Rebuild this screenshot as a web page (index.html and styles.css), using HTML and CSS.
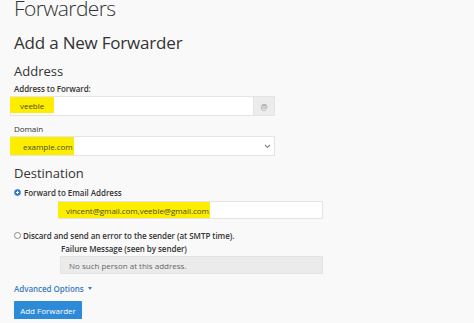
FILE: index.html
```html
<!DOCTYPE html>
<html>
<head>
<meta charset="utf-8">
<link rel="stylesheet" href="styles.css">
</head>
<body>
<div class="page">
  <h1 class="title">Forwarders</h1>
  <h2 class="subtitle">Add a New Forwarder</h2>
  <h3 class="section">Address</h3>
  <div class="label">Address to Forward:</div>
  <div class="input-group">
    <div class="field"><span class="hl hl-veeble">veeble</span></div>
    <div class="addon">@</div>
  </div>
  <div class="label label-plain">Domain</div>
  <div class="select">
    <span class="hl hl-domain">example.com</span>
    <svg class="caret" width="7" height="5" viewBox="0 0 7 5"><path d="M1 1 L3.5 3.5 L6 1" fill="none" stroke="#888" stroke-width="1.1"/></svg>
  </div>
  <h3 class="section dest">Destination</h3>
  <div class="radio-row">
    <span class="radio on"></span><span class="radio-label">Forward to Email Address</span>
  </div>
  <div class="indent">
    <div class="field wide"><span class="hl hl-email">vincent@gmail.com,veeble@gmail.com</span></div>
  </div>
  <div class="radio-row r2">
    <span class="radio"></span><span class="radio-label">Discard and send an error to the sender (at SMTP time).</span>
  </div>
  <div class="indent">
    <div class="sublabel">Failure Message (seen by sender)</div>
    <div class="field wide disabled">No such person at this address.</div>
  </div>
  <div class="adv">Advanced Options <span class="tri"></span></div>
  <div class="btn">Add Forwarder</div>
</div>
</body>
</html>
```

FILE: styles.css
```css
html, body {
  margin: 0;
  padding: 0;
  background: #f9f9f9;
  font-family: "Open Sans", "Noto Sans", sans-serif;
  color: #333;
  overflow: hidden;
}
.page {
  padding-left: 14px;
  width: 460px;
}
.title {
  font-size: 21px;
  font-weight: 300;
  line-height: 24px;
  margin: -4px 0 0 0;
  letter-spacing: -0.6px;
}
.subtitle {
  font-size: 17px;
  font-weight: 400;
  line-height: 22px;
  margin: 12px 0 0 0;
  letter-spacing: -0.2px;
}
.section {
  font-size: 13px;
  font-weight: 400;
  line-height: 16px;
  margin: 9px 0 0 0;
}
.label {
  font-size: 8px;
  font-weight: 600;
  line-height: 11px;
  margin-top: 4px;
  letter-spacing: -0.05px;
}
.label-plain {
  font-weight: 400;
  margin-top: 7px;
}
.input-group {
  display: flex;
  width: 265px;
  height: 20px;
  margin: 2px 0 0 -4px;
}
.field {
  flex: 1;
  background: #fff;
  border: 1px solid #e4e4e4;
  box-sizing: border-box;
  height: 20px;
  display: flex;
  align-items: stretch;
  font-size: 8px;
}
.addon {
  width: 21px;
  background: #ececec;
  border: 1px solid #e4e4e4;
  border-left: none;
  box-sizing: border-box;
  color: #aaa;
  font-size: 8px;
  font-weight: 600;
  display: flex;
  align-items: center;
  justify-content: center;
}
.hl {
  background: #fdee00;
  display: flex;
  align-items: center;
  color: #4a4a30;
  font-size: 8px;
  letter-spacing: -0.05px;
}
.hl-veeble {
  width: 44px;
  padding-left: 10px;
  box-sizing: border-box;
  margin: 0 0 2px -1px;
}
.select {
  display: flex;
  align-items: stretch;
  justify-content: space-between;
  width: 265px;
  height: 20px;
  margin: 2px 0 0 -4px;
  background: #fff;
  border: 1px solid #e4e4e4;
  box-sizing: border-box;
}
.hl-domain {
  width: 64px;
  padding-left: 13px;
  box-sizing: border-box;
  margin: 0 0 0 -1px;
}
.caret {
  align-self: center;
  margin-right: 3px;
}
.dest {
  margin-top: 9px;
}
.radio-row {
  display: flex;
  align-items: center;
  margin-top: 5px;
  height: 12px;
}
.radio {
  width: 5px;
  height: 5px;
  border-radius: 50%;
  border: 1px solid #888;
  background: #fff;
  box-sizing: content-box;
  margin-right: 2px;
  margin-left: 0;
}
.radio.on {
  border-color: #2a7fd4;
  background: radial-gradient(circle, #fff 0 1px, #2a7fd4 1.4px);
  margin-right: 3px;
}
.radio-label {
  font-size: 8px;
  font-weight: 600;
  letter-spacing: -0.05px;
}
.indent {
  padding-left: 44px;
}
.wide {
  width: 265px;
  height: 18px;
  flex: none;
  margin-top: 3px;
}
.hl-email {
  width: 152px;
  padding-left: 8px;
  box-sizing: border-box;
  margin: 0 0 0 -1px;
}
.r2 {
  margin-top: 10px;
}
.sublabel {
  font-size: 8px;
  font-weight: 600;
  margin-top: 2px;
  line-height: 11px;
  padding-left: 3px;
  letter-spacing: -0.05px;
}
.disabled {
  background: #ebebeb;
  color: #666;
  align-items: center;
  padding-left: 8px;
  margin-left: 2px;
  margin-top: 2px;
  width: 263px;
}
.adv {
  color: #3a7cc1;
  font-size: 8px;
  font-weight: 600;
  margin-top: 9px;
  line-height: 11px;
  display: flex;
  align-items: center;
  letter-spacing: -0.05px;
}
.tri {
  width: 0;
  height: 0;
  border-left: 2.5px solid transparent;
  border-right: 2.5px solid transparent;
  border-top: 3px solid #3a7cc1;
  margin-left: 4px;
}
.btn {
  display: inline-flex;
  align-items: center;
  justify-content: center;
  width: 68px;
  height: 18px;
  margin-top: 7px;
  background: #2d8ad6;
  color: #fff;
  font-size: 8px;
  border-radius: 1px;
  box-shadow: 0 1px 1px rgba(0,0,0,0.2);
}
```
